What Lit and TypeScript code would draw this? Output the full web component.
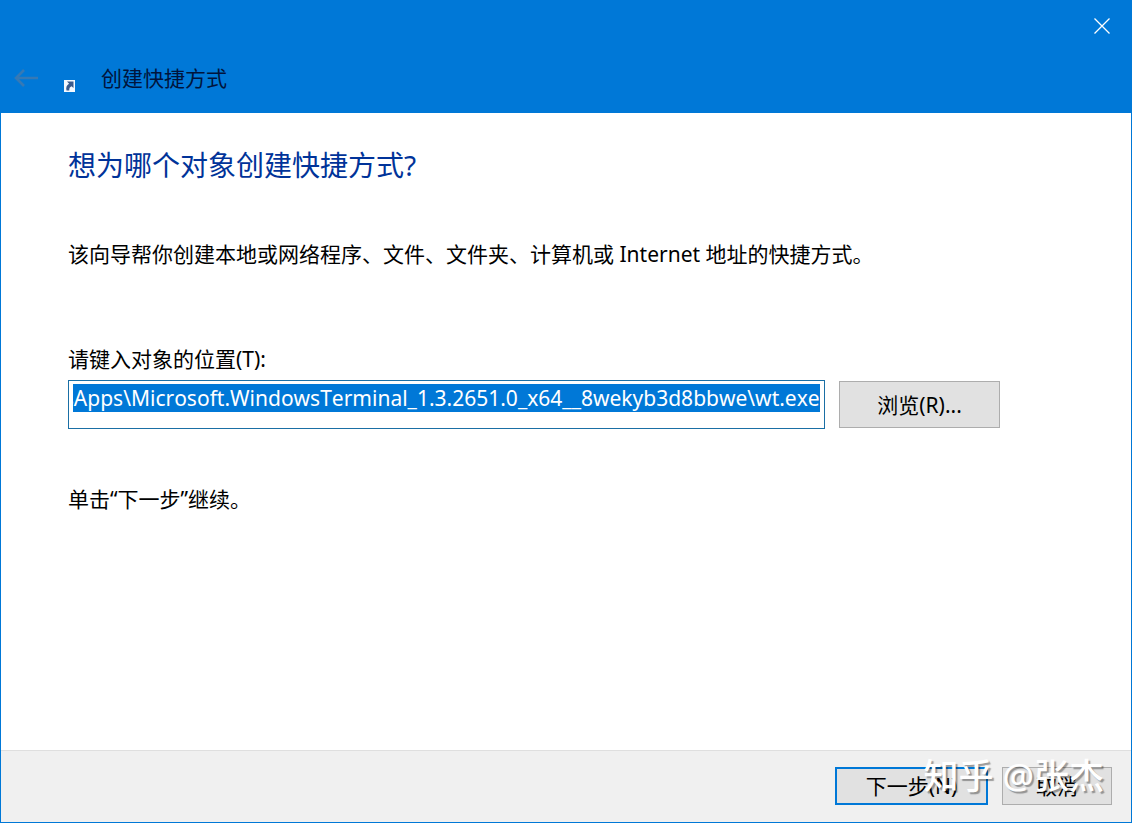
import { LitElement, html, css } from "lit";
import { customElement, query, state } from "lit/decorators.js";

@customElement("app-root")
export class AppRoot extends LitElement {
  static styles = css`
    :host {
      display: block;
      font-family: "Noto Sans", "Noto Sans CJK SC", sans-serif;
      font-size: 21px;
      line-height: 28px;
      color: #000;
    }
    * {
      box-sizing: border-box;
    }
    .window {
      position: relative;
      display: flex;
      flex-direction: column;
      min-height: 100vh;
      border: 1px solid #0078d7;
      border-top: 0;
      background: #fff;
    }
    header {
      background: #0078d7;
    }
    .controls {
      display: flex;
      justify-content: flex-end;
    }
    .close {
      display: flex;
      align-items: center;
      justify-content: center;
      width: 58px;
      height: 52px;
      padding: 0;
      border: 0;
      background: none;
    }
    .caption {
      display: flex;
      align-items: center;
      height: 61px;
      padding: 0 12px 10px;
    }
    .back {
      display: flex;
      padding: 0;
      border: 0;
      background: none;
    }
    .shortcut {
      margin: 16px 24px 0;
    }
    .name {
      margin: 0;
      font-size: 21px;
      font-weight: 400;
      color: #00143c;
    }
    main {
      flex: 1;
      padding: 32px 67px;
    }
    h1 {
      margin: 0;
      font-size: 28px;
      line-height: 40px;
      font-weight: 400;
      color: #003399;
    }
    p {
      margin: 0;
    }
    .intro {
      margin-top: 55px;
    }
    .label {
      display: block;
      margin-top: 77px;
    }
    .row {
      display: flex;
      align-items: center;
      gap: 14px;
      margin-top: 7px;
      max-width: 932px;
    }
    .path {
      flex: 1;
      min-width: 0;
      height: 49px;
      padding: 3px 4px 16px;
      border: 1px solid #1a6fa5;
      border-radius: 0;
      outline: 0;
      background: #fff;
      color: #000;
      font: inherit;
      font-kerning: none;
    }
    .path::selection {
      background: #0078d7;
      color: #fff;
    }
    .hint {
      margin-top: 56px;
    }
    .btn {
      border: 1px solid #adadad;
      border-radius: 0;
      padding: 0;
      background: #e1e1e1;
      color: #000;
      font: inherit;
    }
    .browse {
      width: 161px;
      height: 47px;
    }
    footer {
      display: flex;
      justify-content: flex-end;
      gap: 14px;
      padding: 16px 19px 17px;
      border-top: 1px solid #dfdfdf;
      background: #f0f0f0;
    }
    .next {
      width: 153px;
      height: 38px;
      border: 2px solid #0078d7;
    }
    .cancel {
      width: 110px;
      height: 38px;
    }
    .mark {
      position: absolute;
      right: 27px;
      bottom: 22px;
      font-size: 35px;
      line-height: 48px;
      font-weight: 500;
      color: #fff;
      text-shadow: 2px 2px 1px rgba(0, 0, 0, 0.35);
      pointer-events: none;
    }
  `;

  @state() private target =
    "C:\\Program Files\\WindowsApps\\Microsoft.WindowsTerminal_1.3.2651.0_x64__8wekyb3d8bbwe\\wt.exe";

  @query(".path") private path!: HTMLInputElement;

  protected firstUpdated() {
    this.path.focus();
    this.path.select();
    this.path.scrollLeft = this.path.scrollWidth;
  }

  private onInput(e: Event) {
    this.target = (e.target as HTMLInputElement).value;
  }

  render() {
    return html`
      <div class="window">
        <header>
          <div class="controls">
            <button class="close" aria-label="关闭">
              <svg width="16" height="16" viewBox="0 0 16 16" fill="none" stroke="#fff" stroke-width="1.3">
                <path d="M.5 .5l15 15M15.5 .5l-15 15" />
              </svg>
            </button>
          </div>
          <div class="caption">
            <button class="back" aria-label="返回" disabled>
              <svg width="25" height="20" viewBox="0 0 25 20" fill="none" stroke="#3679b5" stroke-width="2.6">
                <path d="M25 10H3M11 2L3 10l8 8" />
              </svg>
            </button>
            <svg class="shortcut" width="15" height="12" viewBox="0 0 15 12">
              <path d="M2 0h11v12H2z" fill="#f4f9ff" />
              <path d="M5 1.500h6.500v6.500l-2-1.700q-2.500 1-2.200 4.200H4.500q-1.200-4.500 2.600-6.800z" fill="#3a5a8c" />
            </svg>
            <h2 class="name">创建快捷方式</h2>
          </div>
        </header>
        <main>
          <h1>想为哪个对象创建快捷方式?</h1>
          <p class="intro">该向导帮你创建本地或网络程序、文件、文件夹、计算机或 Internet 地址的快捷方式。</p>
          <label class="label" for="path">请键入对象的位置(T):</label>
          <div class="row">
            <input
              id="path"
              class="path"
              type="text"
              spellcheck="false"
              .value=${this.target}
              @input=${this.onInput}
            />
            <button class="btn browse">浏览(R)...</button>
          </div>
          <p class="hint">单击“下一步”继续。</p>
        </main>
        <footer>
          <button class="btn next">下一步(N)</button>
          <button class="btn cancel">取消</button>
        </footer>
        <div class="mark">知乎 @张杰</div>
      </div>
    `;
  }
}
